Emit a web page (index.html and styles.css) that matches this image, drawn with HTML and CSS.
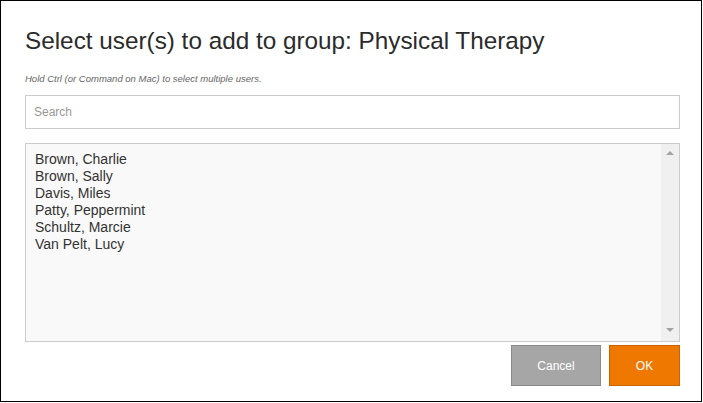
FILE: index.html
```html
<!DOCTYPE html>
<html>
<head>
<meta charset="utf-8">
<link rel="stylesheet" href="styles.css">
</head>
<body>
<div class="dialog">
  <h1 class="title">Select user(s) to add to group: Physical Therapy</h1>
  <p class="hint">Hold Ctrl (or Command on Mac) to select multiple users.</p>
  <input class="search" type="text" placeholder="Search">
  <div class="listbox">
    <ul class="items">
      <li>Brown, Charlie</li>
      <li>Brown, Sally</li>
      <li>Davis, Miles</li>
      <li>Patty, Peppermint</li>
      <li>Schultz, Marcie</li>
      <li>Van Pelt, Lucy</li>
    </ul>
    <div class="scrollbar">
      <span class="arrow up"></span>
      <span class="arrow down"></span>
    </div>
  </div>
  <div class="actions">
    <button class="btn cancel">Cancel</button>
    <button class="btn ok">OK</button>
  </div>
</div>
</body>
</html>
```
FILE: styles.css
```css
html, body {
  margin: 0;
  padding: 0;
  background: #fff;
}
body {
  font-family: "Liberation Sans", Arial, sans-serif;
}
.dialog {
  box-sizing: border-box;
  width: 702px;
  height: 402px;
  border: 1px solid #000;
  padding: 26px 21px 0 24px;
  display: flex;
  flex-direction: column;
}
.title {
  margin: 0;
  font-size: 24.3px;
  line-height: 28px;
  font-weight: normal;
  color: #2b2b2b;
  white-space: nowrap;
}
.hint {
  margin: 18px 0 0 0;
  font-size: 9.5px;
  line-height: 11px;
  font-style: italic;
  color: #666;
}
.search {
  box-sizing: border-box;
  margin: 11px 0 0 0;
  width: 100%;
  height: 34px;
  border: 1px solid #ccc;
  border-radius: 0;
  padding: 0 8px;
  font-family: "Liberation Sans", Arial, sans-serif;
  font-size: 12px;
  color: #333;
  background: #fff;
  outline: none;
}
.search::placeholder {
  color: #999;
}
.listbox {
  box-sizing: border-box;
  margin-top: 14px;
  height: 199px;
  border: 1px solid #ccc;
  background: #f9f9f9;
  display: flex;
}
.items {
  flex: 1;
  list-style: none;
  margin: 0;
  padding: 7px 0 0 9px;
  font-size: 14px;
  line-height: 17px;
  color: #333;
}
.scrollbar {
  width: 18px;
  background: #f0f0f0;
  display: flex;
  flex-direction: column;
  justify-content: space-between;
  align-items: center;
  padding: 7px 0 9px;
}
.arrow {
  width: 0;
  height: 0;
  border-left: 4px solid transparent;
  border-right: 4px solid transparent;
}
.arrow.up {
  border-bottom: 4px solid #a3a3a3;
}
.arrow.down {
  border-top: 4px solid #a3a3a3;
}
.actions {
  margin-top: 3px;
  display: flex;
  justify-content: flex-end;
  gap: 8px;
}
.btn {
  box-sizing: border-box;
  height: 41px;
  border-radius: 0;
  font-family: "Liberation Sans", Arial, sans-serif;
  font-size: 12px;
  color: #fff;
  padding: 0;
  cursor: pointer;
}
.cancel {
  width: 90px;
  background: #a6a6a6;
  border: 1px solid #8a8a8a;
}
.ok {
  width: 71px;
  background: #ef7800;
  border: 1px solid #c86400;
}
```
